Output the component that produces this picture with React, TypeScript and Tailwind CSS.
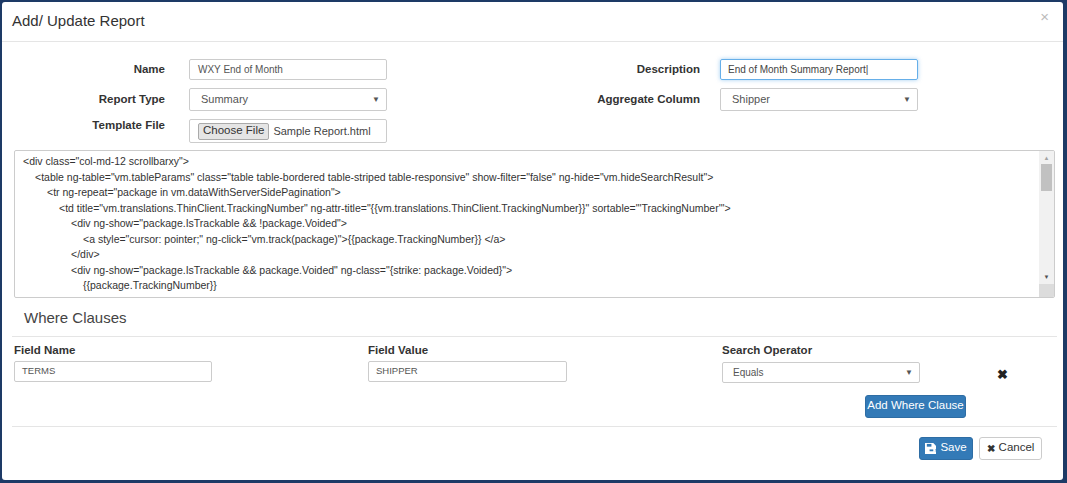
import React from "react";

const F = { fontFamily: '"Liberation Sans", Arial, sans-serif' };

function Caret() {
  return <span className="text-[8px] text-[#555]">▼</span>;
}

const lines: [number, string][] = [
  [0, '<div class="col-md-12 scrollbarxy">'],
  [1, '<table ng-table="vm.tableParams" class="table table-bordered table-striped table-responsive" show-filter="false" ng-hide="vm.hideSearchResult">'],
  [2, '<tr ng-repeat="package in vm.dataWithServerSidePagination">'],
  [3, '<td title="vm.translations.ThinClient.TrackingNumber" ng-attr-title="{{vm.translations.ThinClient.TrackingNumber}}" sortable="\'TrackingNumber\'">'],
  [4, '<div ng-show="package.IsTrackable && !package.Voided">'],
  [5, '<a style="cursor: pointer;" ng-click="vm.track(package)">{{package.TrackingNumber}} </a>'],
  [4, '</div>'],
  [4, '<div ng-show="package.IsTrackable && package.Voided" ng-class="{strike: package.Voided}">'],
  [5, '{{package.TrackingNumber}}'],
  [4, '</div>'],
];

export default function App() {
  return (
    <div style={F} className="w-[1067px] h-[483px] bg-[#1d3a66] pt-[2px] pl-[2px] pr-[4px] pb-[3px] text-[#333]">
      <div className="w-full h-full bg-white rounded-[3px] flex flex-col overflow-hidden">
        <div className="h-[40px] border-b border-[#e5e5e5] flex items-center justify-between pl-[10px] pr-[14px] shrink-0">
          <span className="text-[15px] text-[#333]">Add/ Update Report</span>
          <span className="text-[15px] text-[#bbb] -mt-[8px]">×</span>
        </div>
        <div className="flex flex-col pl-[10px] pr-[8px]">
          <div className="flex pt-[17px]">
            <div className="w-[533px] flex flex-col gap-[8px]">
              <div className="flex items-center">
                <div className="w-[153px] text-right text-[11.5px] font-bold">Name</div>
                <div className="ml-[24px] w-[198px] h-[21px] border border-[#ccc] rounded-[2px] flex items-center px-[8px] text-[10px] text-[#555]">WXY End of Month</div>
              </div>
              <div className="flex items-center">
                <div className="w-[153px] text-right text-[11.5px] font-bold">Report Type</div>
                <div className="ml-[24px] w-[198px] h-[23px] border border-[#ccc] rounded-[2px] flex items-center justify-between pl-[11px] pr-[6px] text-[11px] text-[#555]">Summary<Caret /></div>
              </div>
              <div className="flex items-start">
                <div className="w-[153px] text-right text-[11.5px] font-bold -mt-[2px]">Template File</div>
                <div className="ml-[24px] w-[198px] h-[24px] border border-[#ccc] rounded-[2px] flex items-center pl-[8px] text-[11px] text-[#333]">
                  <span className="bg-[#e5e5e5] border border-[#aaa] rounded-[2px] px-[4px] h-[17px] flex items-center text-[11.5px]">Choose File</span>
                  <span className="ml-[4px] text-[#444]">Sample Report.html</span>
                </div>
              </div>
            </div>
            <div className="flex flex-col gap-[8px]">
              <div className="flex items-center">
                <div className="w-[155px] text-right text-[11.5px] font-bold">Description</div>
                <div className="ml-[20px] w-[198px] h-[21px] border border-[#66afe9] shadow-[0_0_4px_rgba(102,175,233,0.6)] rounded-[2px] flex items-center px-[7px] text-[10px] text-[#444]">End of Month Summary Report|</div>
              </div>
              <div className="flex items-center">
                <div className="w-[155px] text-right text-[11.5px] font-bold">Aggregate Column</div>
                <div className="ml-[20px] w-[198px] h-[23px] border border-[#ccc] rounded-[2px] flex items-center justify-between pl-[11px] pr-[6px] text-[11px] text-[#555]">Shipper<Caret /></div>
              </div>
            </div>
          </div>
          <div className="mt-[7px] ml-[2px] w-[1041px] h-[148px] border border-[#ccc] rounded-[2px] flex overflow-hidden">
            <div className="flex-1 pl-[8px] pt-[3px] text-[10.5px] leading-[15.5px] text-[#333] overflow-hidden whitespace-nowrap">
              {lines.map(([i, t], k) => (
                <div key={k} style={{ paddingLeft: i * 12 }}>{t}</div>
              ))}
            </div>
            <div className="w-[15px] bg-[#f1f1f1] flex flex-col items-center">
              <span className="text-[6px] text-[#a3a3a3] mt-[3px]">▲</span>
              <div className="w-[11px] h-[27px] bg-[#c1c1c1] mt-[1px]"></div>
              <div className="flex-1"></div>
              <span className="text-[6px] text-[#505050] mb-[2px]">▼</span>
              <div className="w-[15px] h-[13px] bg-[#dcdcdc]"></div>
            </div>
          </div>
          <div className="mt-[11px] ml-[12px] text-[15px] leading-[18px] text-[#444]">Where Clauses</div>
          <div className="mt-[9px] border-t border-[#e5e5e5] w-[1045px]"></div>
          <div className="flex mt-[6px] ml-[2px]">
            <div className="w-[354px] flex flex-col">
              <div className="text-[11.5px] leading-[15px] font-bold">Field Name</div>
              <div className="mt-[3px] w-[198px] h-[21px] border border-[#ccc] rounded-[2px] flex items-center px-[7px] text-[9.5px] text-[#555]">TERMS</div>
            </div>
            <div className="w-[354px] flex flex-col">
              <div className="text-[11.5px] leading-[15px] font-bold">Field Value</div>
              <div className="mt-[3px] w-[199px] h-[21px] border border-[#ccc] rounded-[2px] flex items-center px-[7px] text-[9.5px] text-[#555]">SHIPPER</div>
            </div>
            <div className="flex flex-col">
              <div className="text-[11.5px] leading-[15px] font-bold">Search Operator</div>
              <div className="flex items-center mt-[3px]">
                <div className="w-[198px] h-[21px] border border-[#ccc] rounded-[2px] flex items-center justify-between pl-[10px] pr-[6px] text-[10px] text-[#555]">Equals<Caret /></div>
                <span className="ml-[77px] mt-[4px] text-[13px] font-bold text-[#222]">✖</span>
              </div>
              <div className="mt-[10px] ml-[143px] w-[101px] h-[23px] bg-[#337ab7] border border-[#2e6da4] rounded-[3px] text-white text-[11.5px] flex items-center justify-center">Add Where Clause</div>
            </div>
          </div>
          <div className="mt-[8px] border-t border-[#e5e5e5] w-[1045px]"></div>
          <div className="flex justify-end gap-[6px] mt-[10px] pr-[13px]">
            <div className="w-[54px] h-[23px] bg-[#337ab7] border border-[#2e6da4] rounded-[3px] text-white text-[11.5px] flex items-center justify-center gap-[4px]">
              <svg width="11" height="11" viewBox="0 0 12 12"><path d="M0 0h9l3 3v9H0z" fill="#fff"/><rect x="2" y="1" width="5" height="3" fill="#337ab7"/><rect x="5" y="7" width="7" height="2" fill="#337ab7"/><path d="M9 5l3 3-3 3z" fill="#fff"/></svg>
              Save
            </div>
            <div className="w-[63px] h-[23px] bg-white border border-[#ccc] rounded-[3px] text-[#333] text-[11.5px] flex items-center justify-center gap-[4px]">
              <span className="text-[10px] font-bold">✖</span>Cancel
            </div>
          </div>
        </div>
      </div>
    </div>
  );
}
